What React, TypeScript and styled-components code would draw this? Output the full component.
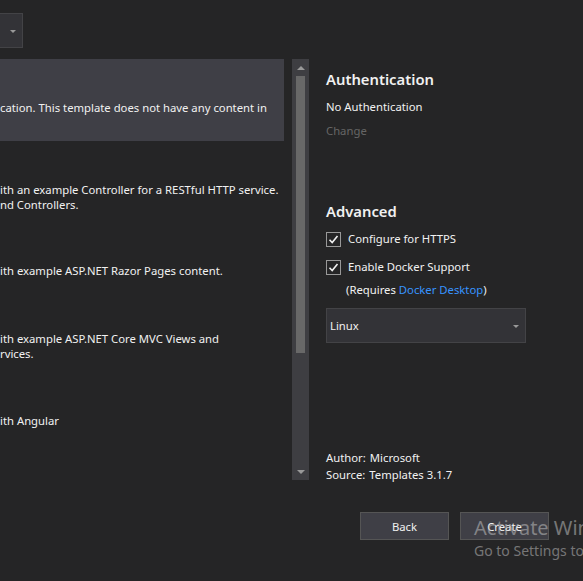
import styled, { createGlobalStyle } from "styled-components";

const GlobalStyle = createGlobalStyle`
  html, body {
    margin: 0;
    padding: 0;
    background: #252526;
  }
  body {
    font-family: "Noto Sans", "Open Sans", sans-serif;
    font-size: 11.3px;
    color: #f1f1f1;
  }
`;

const Page = styled.div`
  position: relative;
  width: 583px;
  height: 581px;
  overflow: hidden;
  background: #252526;
`;

const TopBar = styled.div`
  height: 59px;
  padding-top: 13px;
  box-sizing: border-box;
`;

const Combo = styled.div<{ $width: number; $mt?: number }>`
  position: relative;
  display: flex;
  align-items: center;
  justify-content: space-between;
  box-sizing: border-box;
  width: ${({ $width }) => $width}px;
  height: 35px;
  margin-top: ${({ $mt }) => $mt ?? 0}px;
  padding: 0 6px 0 3px;
  background: #333337;
  border: 1px solid #434346;
  color: #f1f1f1;
`;

const TopCombo = styled(Combo)`
  border-left: none;
  justify-content: flex-end;
`;

const Caret = styled.span`
  width: 0;
  height: 0;
  border-left: 3px solid transparent;
  border-right: 3px solid transparent;
  border-top: 3px solid #999999;
  margin-top: 1px;
`;

const Main = styled.div`
  display: flex;
  height: 421px;
`;

const List = styled.div`
  width: 284px;
  display: flex;
  flex-direction: column;
`;

const Item = styled.div<{ $selected?: boolean; $height: number; $top: number }>`
  box-sizing: border-box;
  height: ${({ $height }) => $height}px;
  padding-top: ${({ $top }) => $top}px;
  background: ${({ $selected }) => ($selected ? "#3f3f46" : "transparent")};
  line-height: 15px;
  white-space: nowrap;
  overflow: hidden;
`;

const Scrollbar = styled.div`
  width: 17px;
  margin-left: 8px;
  background: #3e3e42;
  display: flex;
  flex-direction: column;
  align-items: center;
`;

const ArrowBtn = styled.div<{ $up?: boolean }>`
  height: 17px;
  display: flex;
  align-items: center;
  justify-content: center;
  &::before {
    content: "";
    border-left: 4px solid transparent;
    border-right: 4px solid transparent;
    ${({ $up }) =>
      $up ? "border-bottom: 4px solid #999999;" : "border-top: 4px solid #999999;"}
  }
`;

const Track = styled.div`
  flex: 1;
  width: 9px;
`;

const Thumb = styled.div`
  width: 9px;
  height: 277px;
  background: #686868;
`;

const Side = styled.div`
  margin-left: 17px;
  flex: 1;
  display: flex;
  flex-direction: column;
  padding-top: 10px;
`;

const Heading = styled.div<{ $gap?: number }>`
  font-size: 14.8px;
  font-weight: 600;
  line-height: 20px;
  margin-top: ${({ $gap }) => $gap ?? 0}px;
  color: #f1f1f1;
`;

const Line = styled.div<{ $muted?: boolean; $mt?: number }>`
  line-height: 16px;
  margin-top: ${({ $mt }) => $mt ?? 0}px;
  color: ${({ $muted }) => ($muted ? "#656565" : "#f1f1f1")};
`;

const CheckRow = styled.label<{ $mt: number }>`
  display: flex;
  align-items: center;
  gap: 7px;
  margin-top: ${({ $mt }) => $mt}px;
  line-height: 16px;
`;

const Box = styled.span`
  box-sizing: border-box;
  width: 15px;
  height: 15px;
  border: 1px solid #999999;
  background: #252526;
  display: flex;
  align-items: center;
  justify-content: center;
`;

const Note = styled.div`
  margin: 7px 0 0 20px;
  line-height: 16px;
`;

const Link = styled.a`
  color: #3794ff;
  text-decoration: none;
`;

const Meta = styled.div`
  margin-top: auto;
  margin-bottom: -3px;
`;

const MetaRow = styled.div`
  display: flex;
  gap: 4px;
  line-height: 17px;
`;

const Footer = styled.div`
  display: flex;
  justify-content: flex-end;
  gap: 11px;
  padding: 32px 34px 0 0;
`;

const Button = styled.button`
  box-sizing: border-box;
  width: 89px;
  height: 28px;
  background: #3f3f46;
  border: 1px solid #555555;
  color: #f1f1f1;
  font-family: inherit;
  font-size: 11.3px;
  padding: 0;
`;

const Watermark = styled.div`
  position: absolute;
  left: 474px;
  top: 514px;
  color: rgba(200, 200, 200, 0.5);
  white-space: nowrap;
  pointer-events: none;
`;

const WmTitle = styled.div`
  font-size: 20px;
  line-height: 28px;
`;

const WmSub = styled.div`
  font-size: 14px;
  line-height: 18px;
`;

const Check = () => (
  <svg width="11" height="11" viewBox="0 0 11 11">
    <path d="M1.5 5.8 L4.2 8.5 L9.5 2" stroke="#f1f1f1" strokeWidth="1.6" fill="none" />
  </svg>
);

const items = [
  { h: 82, top: 41, lines: ["cation. This template does not have any content in"], selected: true },
  { h: 81, top: 41, lines: ["ith an example Controller for a RESTful HTTP service.", "nd Controllers."] },
  { h: 81, top: 41, lines: ["ith example ASP.NET Razor Pages content."] },
  { h: 82, top: 28, lines: ["ith example ASP.NET Core MVC Views and", "rvices."] },
  { h: 95, top: 28, lines: ["ith Angular"] },
];

export default function App() {
  return (
    <Page>
      <GlobalStyle />
      <TopBar>
        <TopCombo $width={23}>
          <Caret />
        </TopCombo>
      </TopBar>
      <Main>
        <List>
          {items.map((it, i) => (
            <Item key={i} $selected={it.selected} $height={it.h} $top={it.top}>
              {it.lines.map(l => (
                <div key={l}>{l}</div>
              ))}
            </Item>
          ))}
        </List>
        <Scrollbar>
          <ArrowBtn $up />
          <Track>
            <Thumb />
          </Track>
          <ArrowBtn />
        </Scrollbar>
        <Side>
          <Heading>Authentication</Heading>
          <Line $mt={10}>No Authentication</Line>
          <Line $muted $mt={8}>Change</Line>
          <Heading $gap={62}>Advanced</Heading>
          <CheckRow $mt={10}>
            <Box>
              <Check />
            </Box>
            Configure for HTTPS
          </CheckRow>
          <CheckRow $mt={12}>
            <Box>
              <Check />
            </Box>
            Enable Docker Support
          </CheckRow>
          <Note>
            (Requires <Link href="#">Docker Desktop</Link>)
          </Note>
          <Combo $width={200} $mt={10}>
            Linux
            <Caret />
          </Combo>
          <Meta>
            <MetaRow>
              <span>Author:</span>
              <span>Microsoft</span>
            </MetaRow>
            <MetaRow>
              <span>Source:</span>
              <span>Templates 3.1.7</span>
            </MetaRow>
          </Meta>
        </Side>
      </Main>
      <Footer>
        <Button>Back</Button>
        <Button>Create</Button>
      </Footer>
      <Watermark>
        <WmTitle>Activate Windows</WmTitle>
        <WmSub>Go to Settings to activate Windows.</WmSub>
      </Watermark>
    </Page>
  );
}
